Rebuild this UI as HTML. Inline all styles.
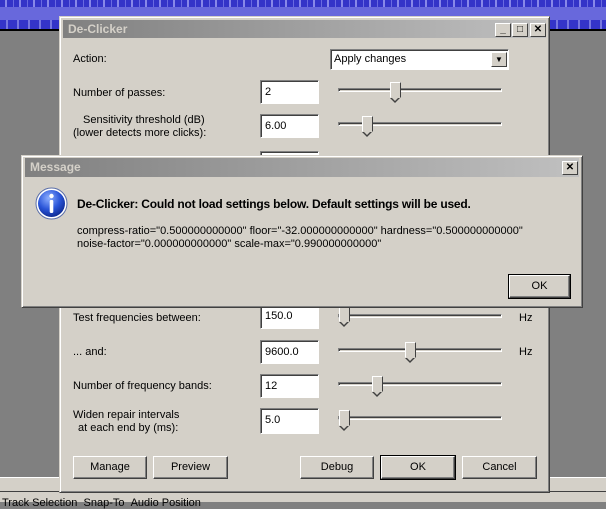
<!DOCTYPE html>
<html><head><style>
*{box-sizing:border-box;margin:0;padding:0}
body{width:606px;height:502px;overflow:hidden;position:relative;background:#808080;font-family:"Liberation Sans",sans-serif;font-size:11px;color:#000}
.a{position:absolute}
.win{background:#d4d0c8;border:1px solid;border-color:#d4d0c8 #404040 #404040 #d4d0c8;box-shadow:inset 1px 1px 0 #fff,inset -1px -1px 0 #808080}
.tb{background:linear-gradient(90deg,#808080,#c0c0c0);color:#d4d0c8;font-weight:bold;font-size:12px;padding:2px 5px;height:18px;line-height:15px}
.tbtn{background:#d4d0c8;border:1px solid;border-color:#fff #404040 #404040 #fff;width:16px;height:14px;font-size:10px;line-height:12px;text-align:center;font-weight:bold}
.box{background:#fff;border:1px solid;border-color:#808080 #fff #fff #808080;box-shadow:inset 1px 1px 0 #404040;padding:5px 4px 0;font-size:11px}
.btn{background:#d4d0c8;border:1px solid;border-color:#fff #404040 #404040 #fff;box-shadow:inset -1px -1px 0 #808080;text-align:center;line-height:20px;font-size:11px}
.track{height:4px;border:1px solid;border-color:#808080 #fff #fff #808080;box-shadow:inset 1px 1px 0 #404040;background:#d4d0c8}
.th{width:11px;height:16px;background:#d4d0c8;border:1px solid;border-color:#fff #404040 transparent #fff}
.th:after{content:"";position:absolute;left:-1px;top:15px;border-left:5.5px solid transparent;border-right:5.5px solid transparent;border-top:5px solid #404040}
.th:before{content:"";position:absolute;left:0px;top:14px;border-left:4.5px solid transparent;border-right:4.5px solid transparent;border-top:4.5px solid #d4d0c8;z-index:1}
</style></head><body>
<div class="a" style="left:0;top:0;width:606px;height:7px;background:#3434c8;background-image:repeating-linear-gradient(90deg,#3434c8 0 5px,#8888e8 5px 7px,#3434c8 7px 13px,#6a6ae0 13px 14px)"></div>
<div class="a" style="left:0;top:7px;width:606px;height:13px;background:#6868dc"></div>
<div class="a" style="left:0;top:20px;width:606px;height:9px;background:#3434c8;background-image:repeating-linear-gradient(90deg,#3434c8 0 6px,#7777e0 6px 8px,#3434c8 8px 11px)"></div>
<div class="a" style="left:0;top:29px;width:606px;height:2px;background:#000"></div>
<div class="a" style="left:0;top:477px;width:606px;height:15px;background:#d4d0c8;border-top:1px solid #fff;border-bottom:1px solid #404040"></div>
<div class="a" style="left:0;top:492px;width:606px;height:10px;background:#d4d0c8"></div>
<div class="a" style="left:2px;top:497px;font-size:11px">Track Selection &nbsp;Snap-To &nbsp;Audio Position</div>

<div class="a win" style="left:59px;top:16px;width:491px;height:477px">
 <div class="a tb" style="left:3px;top:3px;width:483px">De-Clicker</div>
 <div class="a tbtn" style="left:435px;top:6px">_</div>
 <div class="a tbtn" style="left:452px;top:6px">□</div>
 <div class="a tbtn" style="left:470px;top:6px">✕</div>
</div>
<div class="a" style="left:73px;top:53px">Action:</div>
<div class="a box" style="left:330px;top:49px;width:179px;height:21px;padding:3px 3px">Apply changes</div>
<div class="a tbtn" style="left:491px;top:52px;width:16px;height:15px;font-size:8px;line-height:13px">▼</div>

<div class="a" style="left:73px;top:87px">Number of passes:</div>
<div class="a box" style="left:260px;top:80px;width:59px;height:24px">2</div>
<div class="a track" style="left:338px;top:88px;width:164px"></div>
<div class="a th" style="left:390px;top:82px"></div>

<div class="a" style="left:83px;top:114px">Sensitivity threshold (dB)</div>
<div class="a" style="left:73px;top:127px">(lower detects more clicks):</div>
<div class="a box" style="left:260px;top:114px;width:59px;height:24px">6.00</div>
<div class="a track" style="left:338px;top:122px;width:164px"></div>
<div class="a th" style="left:362px;top:116px"></div>
<div class="a box" style="left:260px;top:151px;width:59px;height:24px"></div>

<div class="a" style="left:73px;top:312px">Test frequencies between:</div>
<div class="a box" style="left:260px;top:303px;width:59px;height:26px;padding-top:6px">150.0</div>
<div class="a track" style="left:338px;top:314px;width:164px"></div>
<div class="a th" style="left:339px;top:306px"></div>
<div class="a" style="left:519px;top:312px">Hz</div>

<div class="a" style="left:73px;top:346px">... and:</div>
<div class="a box" style="left:260px;top:340px;width:59px;height:24px">9600.0</div>
<div class="a track" style="left:338px;top:348px;width:164px"></div>
<div class="a th" style="left:405px;top:342px"></div>
<div class="a" style="left:519px;top:346px">Hz</div>

<div class="a" style="left:73px;top:380px">Number of frequency bands:</div>
<div class="a box" style="left:260px;top:374px;width:59px;height:24px">12</div>
<div class="a track" style="left:338px;top:382px;width:164px"></div>
<div class="a th" style="left:372px;top:376px"></div>

<div class="a" style="left:73px;top:409px">Widen repair intervals</div>
<div class="a" style="left:78px;top:422px">at each end by (ms):</div>
<div class="a box" style="left:260px;top:408px;width:59px;height:26px">5.0</div>
<div class="a track" style="left:338px;top:416px;width:164px"></div>
<div class="a th" style="left:339px;top:410px"></div>

<div class="a btn" style="left:73px;top:456px;width:74px;height:23px">Manage</div>
<div class="a btn" style="left:153px;top:456px;width:75px;height:23px">Preview</div>
<div class="a btn" style="left:300px;top:456px;width:74px;height:23px">Debug</div>
<div class="a btn" style="left:381px;top:456px;width:74px;height:23px;outline:1px solid #000">OK</div>
<div class="a btn" style="left:462px;top:456px;width:75px;height:23px">Cancel</div>

<div class="a win" style="left:21px;top:155px;width:562px;height:153px">
 <div class="a tb" style="left:3px;top:2px;width:554px;height:19px">Message</div>
 <div class="a tbtn" style="left:540px;top:5px">✕</div>
 <svg class="a" style="left:13px;top:31px" width="33" height="33" viewBox="0 0 33 33">
  <defs><radialGradient id="g" cx="40%" cy="30%" r="70%"><stop offset="0" stop-color="#8fb0ff"/><stop offset="0.6" stop-color="#2a55d8"/><stop offset="1" stop-color="#102e98"/></radialGradient></defs>
  <circle cx="16.5" cy="16.5" r="15.5" fill="#fff" stroke="#5a6ea8"/>
  <circle cx="16.5" cy="16.5" r="13.5" fill="url(#g)"/>
  <circle cx="16.5" cy="9" r="2.2" fill="#fff"/>
  <rect x="14.7" y="13" width="3.6" height="13" rx="1.2" fill="#fff"/>
 </svg>
 <div class="a" style="left:55px;top:41px;font-weight:bold;font-size:12px;letter-spacing:-0.2px">De-Clicker: Could not load settings below. Default settings will be used.</div>
 <div class="a" style="left:55px;top:69px;line-height:13px;font-size:11px">compress-ratio="0.500000000000" floor="-32.000000000000" hardness="0.500000000000"<br>noise-factor="0.000000000000" scale-max="0.990000000000"</div>
 <div class="a btn" style="left:487px;top:119px;width:61px;height:23px;outline:1px solid #000">OK</div>
</div>
</body></html>
